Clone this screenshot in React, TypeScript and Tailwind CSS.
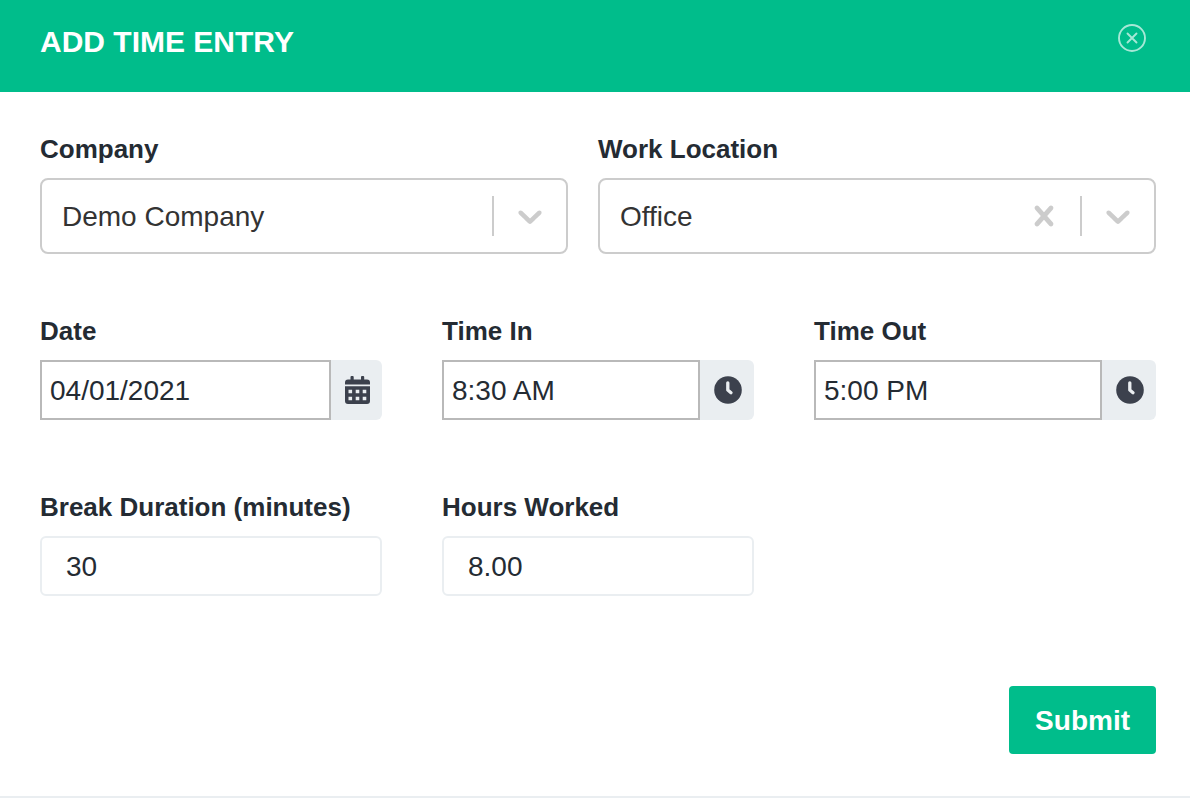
import { useState } from "react";

interface FieldProps {
  id: string;
  label: string;
  children: React.ReactNode;
}

interface SelectProps {
  id: string;
  value: string;
  options: string[];
  clearable?: boolean;
  onChange: (value: string) => void;
}

interface PickerProps {
  id: string;
  value: string;
  icon: React.ReactNode;
  iconLabel: string;
  onChange: (value: string) => void;
}

const CalendarIcon: React.FC = () => (
  <svg viewBox="0 0 25 28" className="w-[25px] h-7" fill="currentColor">
    <path d="M3 3.5H5.5V1a1 1 0 0 1 1-1H7.700a1 1 0 0 1 1 1V3.500H16V1a1 1 0 0 1 1-1H18.200a1 1 0 0 1 1 1V3.500H22a3 3 0 0 1 3 3V8.500H0V6.500a3 3 0 0 1 3-3z" />
    <path
      fillRule="evenodd"
      d="M0 10.200H25V25a3 3 0 0 1-3 3H3a3 3 0 0 1-3-3zM3.500 13.700v3.600h3.600v-3.600zM10.700 13.700v3.600h3.600v-3.600zM17.700 13.700v3.600h3.600v-3.600zM3.500 20.700v3.600h3.600v-3.600zM10.700 20.700v3.600h3.600v-3.600zM17.700 20.700v3.600h3.600v-3.600z"
    />
  </svg>
);

const ClockIcon: React.FC = () => (
  <svg viewBox="0 0 28 28" className="size-7" fill="none">
    <circle cx="14" cy="14" r="13.8" fill="currentColor" />
    <path
      d="M13.800 6.800V14l3.200 2.700"
      stroke="#eaeef1"
      strokeWidth="3.300"
      strokeLinecap="round"
      strokeLinejoin="round"
    />
  </svg>
);

const Field: React.FC<FieldProps> = ({ id, label, children }) => (
  <div className="min-w-0">
    <label
      htmlFor={id}
      className="block mb-[10px] text-[26px] leading-[38px] font-bold"
    >
      {label}
    </label>
    {children}
  </div>
);

const Select: React.FC<SelectProps> = ({
  id,
  value,
  options,
  clearable,
  onChange,
}) => (
  <div className="relative">
    <select
      id={id}
      value={value}
      onChange={(e) => onChange(e.target.value)}
      className="block w-full h-[76px] pt-[2px] pl-5 pr-20 appearance-none rounded-lg border-2 border-[#cccccc] bg-white text-[28px] text-[#333333]"
    >
      {clearable && <option value="" />}
      {options.map((option) => (
        <option key={option}>{option}</option>
      ))}
    </select>
    <div className="absolute inset-y-[2px] right-[2px] flex items-center text-[#cccccc] pointer-events-none">
      {clearable && value && (
        <button
          type="button"
          aria-label="Clear"
          onClick={() => onChange("")}
          className="p-4 cursor-pointer pointer-events-auto"
        >
          <svg viewBox="0 0 20 20" className="size-10 fill-current">
            <path d="M14.348 14.849c-0.469 0.469-1.229 0.469-1.697 0l-2.651-3.030-2.651 3.029c-0.469 0.469-1.229 0.469-1.697 0-0.469-0.469-0.469-1.229 0-1.697l2.758-3.15-2.759-3.152c-0.469-0.469-0.469-1.228 0-1.697s1.228-0.469 1.697 0l2.652 3.031 2.651-3.031c0.469-0.469 1.228-0.469 1.697 0s0.469 1.229 0 1.697l-2.758 3.152 2.758 3.15c0.469 0.469 0.469 1.229 0 1.698z" />
          </svg>
        </button>
      )}
      <span className="w-[2px] h-10 bg-[#cccccc]" />
      <span className="p-4">
        <svg viewBox="0 0 20 20" className="size-10 fill-current">
          <path d="M4.516 7.548c0.436-0.446 1.043-0.481 1.576 0l3.908 3.747 3.908-3.747c0.533-0.481 1.141-0.446 1.574 0 0.436 0.445 0.408 1.197 0 1.615-0.406 0.418-4.695 4.502-4.695 4.502-0.217 0.223-0.502 0.335-0.787 0.335s-0.57-0.112-0.789-0.335c0 0-4.287-4.084-4.695-4.502s-0.436-1.17 0-1.615z" />
        </svg>
      </span>
    </div>
  </div>
);

const Picker: React.FC<PickerProps> = ({
  id,
  value,
  icon,
  iconLabel,
  onChange,
}) => (
  <div className="flex h-[60px]">
    <input
      id={id}
      type="text"
      value={value}
      onChange={(e) => onChange(e.target.value)}
      className="flex-1 min-w-0 pt-[2px] px-2 border-2 border-[#b9b9b9] bg-white text-[28px]"
    />
    <button
      type="button"
      aria-label={iconLabel}
      className="flex items-center pl-[14px] pr-3 rounded-r-md bg-[#eaeef1] text-[#3c414d] cursor-pointer"
    >
      {icon}
    </button>
  </div>
);

const inputClass =
  "block w-full h-[60px] pt-[2px] px-6 rounded-md border-2 border-[#eaeef1] bg-white text-[28px]";

export default function App() {
  const [company, setCompany] = useState("Demo Company");
  const [location, setLocation] = useState("Office");
  const [date, setDate] = useState("04/01/2021");
  const [timeIn, setTimeIn] = useState("8:30 AM");
  const [timeOut, setTimeOut] = useState("5:00 PM");
  const [breakTime, setBreakTime] = useState("30");
  const [hours, setHours] = useState("8.00");

  return (
    <div className="bg-white border-b-2 border-[#eaeef1] text-[#242b33] font-['Liberation_Sans',Arial,sans-serif]">
      <header className="flex items-start justify-between pt-6 pb-8 pl-10 pr-11 bg-[#00bd8b] text-white">
        <h1 className="text-[30px] leading-[36px] font-bold">ADD TIME ENTRY</h1>
        <button type="button" aria-label="Close" className="cursor-pointer">
          <svg
            viewBox="0 0 28 28"
            className="size-7 opacity-65"
            fill="none"
            stroke="currentColor"
            strokeWidth="1.900"
            strokeLinecap="round"
          >
            <circle cx="14" cy="14" r="13" />
            <path d="M9.500 9.500l9 9M18.500 9.500l-9 9" />
          </svg>
        </button>
      </header>

      <form
        className="pt-[38px] pb-[42px] pl-10 pr-[34px]"
        onSubmit={(e) => e.preventDefault()}
      >
        <div className="grid grid-cols-[528fr_558fr] gap-[30px] mb-[58px]">
          <Field id="company" label="Company">
            <Select
              id="company"
              value={company}
              options={["Demo Company"]}
              onChange={setCompany}
            />
          </Field>
          <Field id="location" label="Work Location">
            <Select
              id="location"
              value={location}
              options={["Office"]}
              clearable
              onChange={setLocation}
            />
          </Field>
        </div>

        <div className="grid grid-cols-[342fr_312fr_342fr] gap-x-[60px] gap-y-[68px]">
          <Field id="date" label="Date">
            <Picker
              id="date"
              value={date}
              icon={<CalendarIcon />}
              iconLabel="Pick a date"
              onChange={setDate}
            />
          </Field>
          <Field id="time-in" label="Time In">
            <Picker
              id="time-in"
              value={timeIn}
              icon={<ClockIcon />}
              iconLabel="Pick time in"
              onChange={setTimeIn}
            />
          </Field>
          <Field id="time-out" label="Time Out">
            <Picker
              id="time-out"
              value={timeOut}
              icon={<ClockIcon />}
              iconLabel="Pick time out"
              onChange={setTimeOut}
            />
          </Field>
          <Field id="break" label="Break Duration (minutes)">
            <input
              id="break"
              type="text"
              value={breakTime}
              onChange={(e) => setBreakTime(e.target.value)}
              className={inputClass}
            />
          </Field>
          <Field id="hours" label="Hours Worked">
            <input
              id="hours"
              type="text"
              value={hours}
              onChange={(e) => setHours(e.target.value)}
              className={inputClass}
            />
          </Field>
        </div>

        <div className="flex justify-end mt-[90px]">
          <button
            type="submit"
            className="h-[68px] pt-[2px] px-[26px] rounded-sm bg-[#00bd8b] text-[28px] font-bold text-white cursor-pointer"
          >
            Submit
          </button>
        </div>
      </form>
    </div>
  );
}
